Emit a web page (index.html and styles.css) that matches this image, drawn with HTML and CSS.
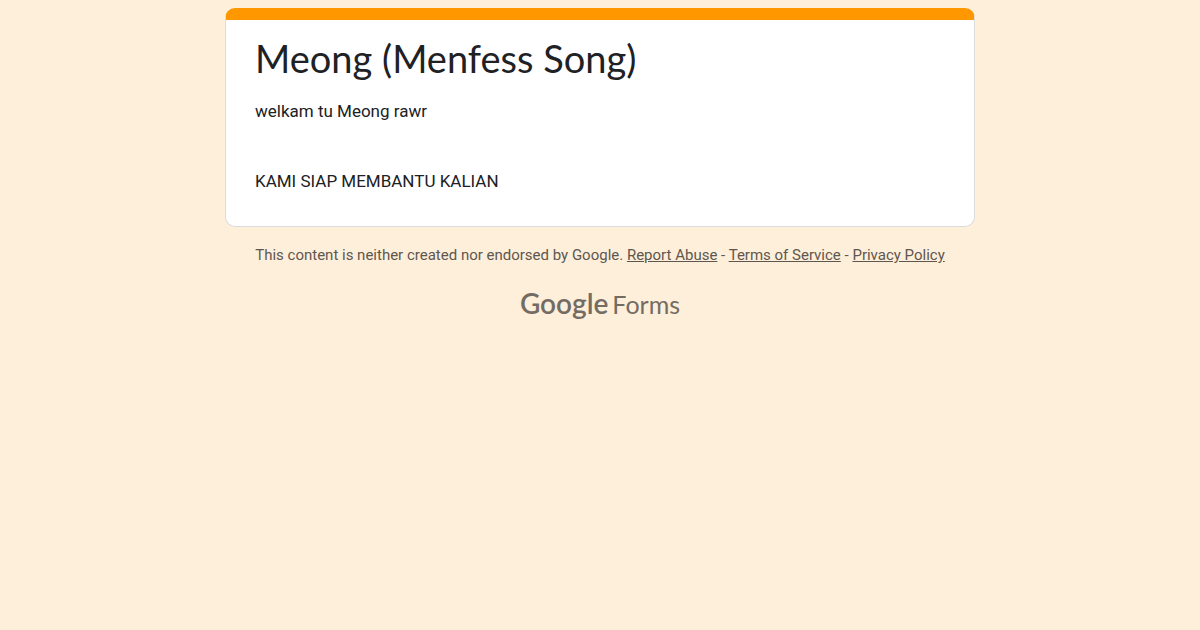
FILE: index.html
```html
<!doctype html>

<html lang="id">
  <head>
    <meta charset="utf-8">
    <meta name="viewport" content="width=device-width, initial-scale=1">
    <title>Meong (Menfess Song)</title>
    <link rel="stylesheet" href="styles.css">
  </head>
  <body>

    <main class="page">
      <div class="card">
        <h1>Meong (Menfess Song)</h1>
        <div class="description">
          <p>welkam tu Meong rawr</p>
          <p>KAMI SIAP MEMBANTU KALIAN</p>
        </div>
      </div>

      <div class="disclaimer">
        This content is neither created nor endorsed by Google.
        <a href="#">Report Abuse</a> - <a href="#">Terms of Service</a> - <a href="#">Privacy Policy</a>
      </div>

      <a class="logo" href="#"><span class="google">Google</span><span>Forms</span></a>
    </main>

  </body>
</html>
```

FILE: styles.css
```css
body {
  background: #feefda;
  color: #202124;
  font: 17px/24px Roboto, Arial, sans-serif;
  margin: 0;
}

.page {
  margin: 0 auto;
  max-width: 750px;
  padding-top: 8px;
}

.card {
  background: #fff;
  border: 1px solid #dadce0;
  border-top: 12px solid #ff9800;
  border-radius: 10px;
  padding: 14px 29px 33px;
}

h1 {
  font: 38px/48px Lato, Roboto, sans-serif;
  margin: 0;
}

.description {
  padding-top: 17px;
}
.description p {
  margin: 0 0 46px;
}
.description p:last-child {
  margin-bottom: 0;
}

.disclaimer {
  color: #5f574f;
  font-size: 15px;
  line-height: 20px;
  padding: 18px 0 22px;
  text-align: center;
}
.disclaimer a {
  color: inherit;
}

.logo {
  align-items: baseline;
  color: #736c63;
  display: flex;
  font: 25px/32px Lato, Roboto, sans-serif;
  gap: 4px;
  justify-content: center;
  text-decoration: none;
}
.google {
  font-size: 28px;
  font-weight: 600;
}
```
